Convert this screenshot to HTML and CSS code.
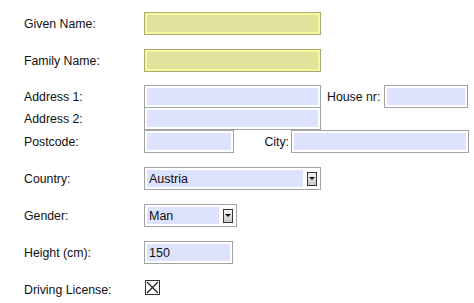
FILE: index.html
```html
<!DOCTYPE html>
<html lang="en">
<head>
    <meta charset="UTF-8">
    <title>Person Form</title>
    <link rel="stylesheet" href="styles.css">
</head>
<body>
    <form class="form">
        <div class="row">
            <label class="label" for="given">Given Name:</label>
            <input class="field required wide" id="given" type="text">
        </div>

        <div class="row">
            <label class="label" for="family">Family Name:</label>
            <input class="field required wide" id="family" type="text">
        </div>

        <div class="address">
            <div class="row tight">
                <label class="label" for="addr1">Address 1:</label>
                <input class="field wide" id="addr1" type="text">
                <label class="label-inline house-label" for="house">House nr:</label>
                <input class="field house" id="house" type="text">
            </div>
            <div class="row tight joined">
                <label class="label" for="addr2">Address 2:</label>
                <input class="field wide" id="addr2" type="text">
            </div>
            <div class="row tight">
                <label class="label" for="postcode">Postcode:</label>
                <input class="field postcode" id="postcode" type="text">
                <label class="label-inline city-label" for="city">City:</label>
                <input class="field city" id="city" type="text">
            </div>
        </div>

        <div class="row">
            <label class="label" for="country">Country:</label>
            <span class="select wide">
                <select class="field" id="country">
                    <option>Austria</option>
                </select>
                <span class="arrow"></span>
            </span>
        </div>

        <div class="row">
            <label class="label" for="gender">Gender:</label>
            <span class="select gender">
                <select class="field" id="gender">
                    <option>Man</option>
                </select>
                <span class="arrow"></span>
            </span>
        </div>

        <div class="row">
            <label class="label" for="height">Height (cm):</label>
            <input class="field height" id="height" type="text" value="150">
        </div>

        <div class="row check-row">
            <span class="label">Driving License:</span>
            <span class="checkbox">
                <svg width="15" height="15" viewBox="0 0 15 15">
                    <rect x="0.5" y="0.5" width="14" height="14" fill="#fff" stroke="#333"/>
                    <path d="M2 2 L13 13 M13 2 L2 13" stroke="#222" stroke-width="1.2"/>
                </svg>
            </span>
        </div>
    </form>
</body>
</html>
```

FILE: styles.css
```css
body {
    margin: 0;
    padding: 0;
    background: #fff;
    color: #111;
    font-family: "Liberation Sans", Arial, sans-serif;
    font-size: 12.3px;
}

.form {
    display: flex;
    flex-direction: column;
    gap: 14px;
    padding: 12px 0 0 24px;
}

.row {
    display: flex;
    align-items: center;
    height: 23px;
}

.address {
    display: flex;
    flex-direction: column;
    margin-top: -1px;
}

.row.joined {
    margin-top: -1px;
}

.label {
    width: 120px;
    flex: none;
}

.label-inline {
    flex: none;
}

.field {
    box-sizing: border-box;
    height: 23px;
    margin: 0;
    padding: 0 4px;
    border: 1px solid #a3a3a3;
    background: #dde3fd;
    box-shadow: inset 0 0 0 2px #fff;
    font-family: "Liberation Sans", Arial, sans-serif;
    font-size: 12.5px;
    color: #111;
    outline: none;
}

.field.required {
    border-color: #aea878;
    background: #e2e29c;
    box-shadow: inset 0 0 0 2px #f7f79c;
}

.wide { width: 177px; }
.house { width: 84px; }
.postcode { width: 90px; }
.city { width: 178px; }
.height { width: 89px; }
.gender { width: 93px; }

.house-label {
    margin: 0 4px 0 6px;
}

.city-label {
    width: 55px;
    margin-right: 2px;
    text-align: right;
}

.select {
    position: relative;
    display: block;
    height: 23px;
}

.select select {
    width: 100%;
    appearance: none;
    -webkit-appearance: none;
    background: linear-gradient(to right, #dde3fd calc(100% - 17px), #fff calc(100% - 17px));
}

.select .arrow {
    position: absolute;
    right: 4px;
    top: 5px;
    width: 8px;
    height: 12px;
    border: 1px solid #333;
    background: linear-gradient(#f4f4f4, #c8c8c8);
}

.select .arrow::after {
    content: "";
    position: absolute;
    left: 1px;
    top: 4px;
    border-left: 3px solid transparent;
    border-right: 3px solid transparent;
    border-top: 3px solid #111;
}

.check-row .checkbox {
    display: block;
    width: 15px;
    height: 15px;
    margin: 0 0 5px 1px;
}

.checkbox svg {
    display: block;
}
```
